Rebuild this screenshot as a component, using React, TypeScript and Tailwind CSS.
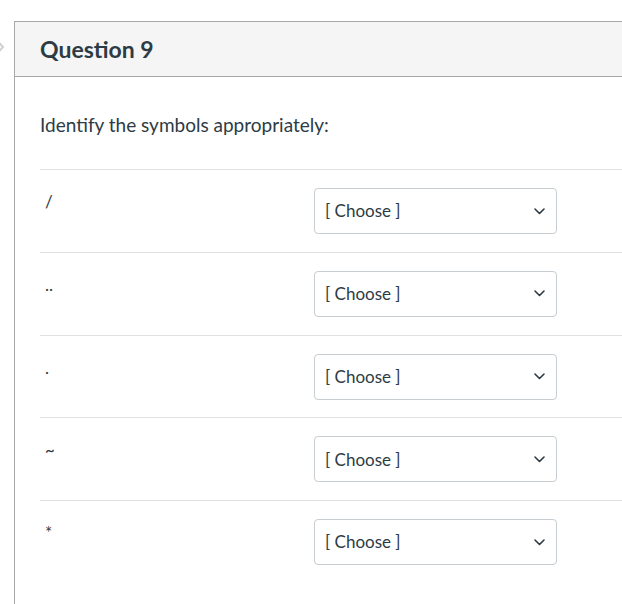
import React from "react";

const symbols = ["/", "..", ".", "~", "*"];

function ChoiceSelect() {
  return (
    <div className="relative w-[243px] h-[46px] rounded-[4px] border border-[#c7cdd1] bg-white flex items-center pl-[10px] pr-[12px] justify-between">
      <span className="text-[17px] text-[#2d3b45]">[ Choose ]</span>
      <svg width="11" height="7" viewBox="0 0 11 7" fill="none" className="mr-[-1px]">
        <path d="M1 1 L5.5 5.5 L10 1" stroke="#2d3b45" strokeWidth="1.6" strokeLinecap="round" strokeLinejoin="round" />
      </svg>
    </div>
  );
}

export default function App() {
  return (
    <div
      className="relative w-[622px] h-[604px] overflow-hidden bg-white"
      style={{ fontFamily: "Lato, 'Noto Sans', sans-serif" }}
    >
      {/* faint arrow peeking from the left edge */}
      <svg
        className="absolute left-[-5px] top-[39px]"
        width="10"
        height="16"
        viewBox="0 0 10 16"
        fill="none"
      >
        <path d="M2 1.5 L8 8 L2 14.5" stroke="#d0d0d0" strokeWidth="2" strokeLinecap="round" />
      </svg>

      <div className="pt-[21px] pl-[14px]">
        <div className="border-l border-[#a8a8a8] min-h-[583px]">
          {/* header */}
          <div className="h-[56px] border-y border-[#a8a8a8] bg-[#f5f5f5] flex items-center pl-[25px]">
            <h2 className="text-[23px] font-bold text-[#2d3b45] leading-none">Question 9</h2>
          </div>

          {/* body */}
          <div className="pl-[25px]">
            <p className="mt-[34px] text-[19px] leading-[28px] text-[#2d3b45]">
              Identify the symbols appropriately:
            </p>

            <div className="mt-[30px]">
              {symbols.map((s, i) => (
                <div key={i} className="border-t border-[#e0e0e0] h-[82.75px] flex">
                  <div className="w-[274px] pl-[5px] pt-[20px] text-[17px] leading-[24px] text-[#2d3b45]">
                    {s}
                  </div>
                  <div className="pt-[18px]">
                    <ChoiceSelect />
                  </div>
                </div>
              ))}
            </div>
          </div>
        </div>
      </div>
    </div>
  );
}
